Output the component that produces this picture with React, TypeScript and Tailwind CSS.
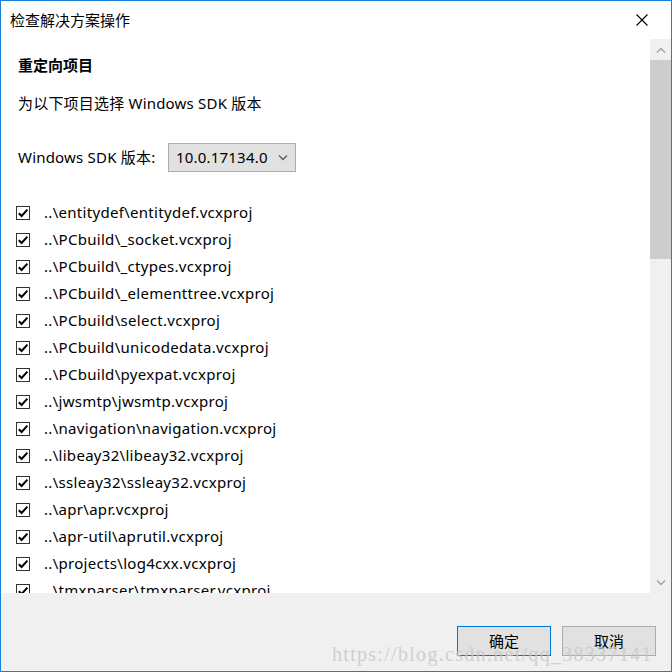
import React from 'react';

const projects = [
  '..\\entitydef\\entitydef.vcxproj',
  '..\\PCbuild\\_socket.vcxproj',
  '..\\PCbuild\\_ctypes.vcxproj',
  '..\\PCbuild\\_elementtree.vcxproj',
  '..\\PCbuild\\select.vcxproj',
  '..\\PCbuild\\unicodedata.vcxproj',
  '..\\PCbuild\\pyexpat.vcxproj',
  '..\\jwsmtp\\jwsmtp.vcxproj',
  '..\\navigation\\navigation.vcxproj',
  '..\\libeay32\\libeay32.vcxproj',
  '..\\ssleay32\\ssleay32.vcxproj',
  '..\\apr\\apr.vcxproj',
  '..\\apr-util\\aprutil.vcxproj',
  '..\\projects\\log4cxx.vcxproj',
  '..\\tmxparser\\tmxparser.vcxproj',
];

const uiFont = "font-['Noto_Sans','Noto_Sans_CJK_SC',sans-serif]";

function CheckBox() {
  return (
    <span className="w-[14px] h-[14px] border border-[#333333] bg-white flex items-center justify-center shrink-0">
      <svg width="12" height="12" viewBox="0 0 12 12">
        <path d="M1.8 6.2 L4.6 9 L10.4 2.6" fill="none" stroke="#000" strokeWidth="2" />
      </svg>
    </span>
  );
}

function Chevron({ dir, color }: { dir: 'up' | 'down'; color: string }) {
  return (
    <svg width="10" height="6" viewBox="0 0 10 6">
      <path
        d={dir === 'up' ? 'M1 5.5 L5 1.5 L9 5.5' : 'M1 0.5 L5 4.5 L9 0.5'}
        fill="none"
        stroke={color}
        strokeWidth="1.3"
      />
    </svg>
  );
}

export default function App() {
  return (
    <div className={`relative w-[672px] h-[672px] border border-[#1a7fd6] bg-white flex flex-col overflow-hidden text-[15px] text-black ${uiFont}`}>
      {/* title bar */}
      <div className="h-[38px] flex items-center justify-between pl-[9px] pr-[23px] shrink-0">
        <span className="text-[15px] leading-none">检查解决方案操作</span>
        <svg width="12" height="12" viewBox="0 0 12 12">
          <path d="M0.5 0.5 L11.5 11.5 M11.5 0.5 L0.5 11.5" stroke="#000" strokeWidth="1.1" />
        </svg>
      </div>

      {/* scrollable area */}
      <div className="flex-1 flex min-h-0">
        <div className="flex-1 overflow-hidden pl-[17px]">
          <div className="mt-[13px] h-[27px] flex items-center font-bold">重定向项目</div>
          <div className="mt-[11px] h-[27px] flex items-center tracking-[0.2px]">为以下项目选择 Windows SDK 版本</div>
          <div className="mt-[26px] h-[29px] flex items-center tracking-[0.2px]">
            <span className="w-[150px]">Windows SDK 版本:</span>
            <div className="w-[128px] h-[29px] border border-[#adadad] bg-[#e1e1e1] flex items-center justify-between pl-[7px] pr-[7px]">
              <span>10.0.17134.0</span>
              <Chevron dir="down" color="#5a5a5a" />
            </div>
          </div>
          <div className="mt-[27px] flex flex-col tracking-[0.3px]">
            {projects.map((p) => (
              <div key={p} className="h-[27px] shrink-0 flex items-center -ml-[2px]">
                <CheckBox />
                <span className="ml-[14px] whitespace-nowrap">{p}</span>
              </div>
            ))}
          </div>
        </div>
        {/* scrollbar */}
        <div className="w-[21px] bg-[#f0f0f0] flex flex-col shrink-0">
          <div className="h-[21px] flex items-center justify-center">
            <Chevron dir="up" color="#a3a3a3" />
          </div>
          <div className="h-[199px] bg-[#cdcdcd]" />
          <div className="flex-1" />
          <div className="h-[21px] flex items-center justify-center">
            <Chevron dir="down" color="#a3a3a3" />
          </div>
        </div>
      </div>

      {/* footer */}
      <div className="h-[78px] bg-[#f0f0f0] shrink-0 flex justify-end items-start pt-[33px] pr-[15px] gap-[11px]">
        <button className="w-[94px] h-[30px] border border-[#0078d7] bg-[#e1e1e1] flex items-center justify-center">确定</button>
        <button className="w-[94px] h-[30px] border border-[#adadad] bg-[#e1e1e1] flex items-center justify-center">取消</button>
      </div>

      {/* watermark */}
      <div className="absolute left-[331px] top-[638px] font-['Liberation_Serif',serif] text-[20px] tracking-[1.3px] text-[#c8c8c8] opacity-80 whitespace-nowrap pointer-events-none">
        https://blog.csdn.net/qq_38337141
      </div>
    </div>
  );
}
